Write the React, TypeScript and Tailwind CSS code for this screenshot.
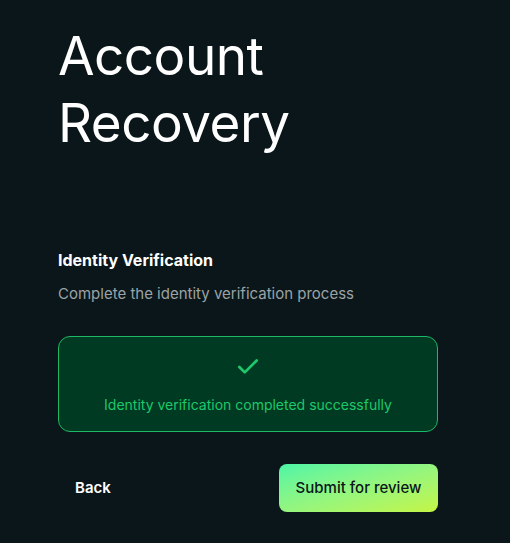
import { Check } from "lucide-react"

export default function App() {
  return (
    <div
      className="min-h-[543px] w-full bg-[#0a1619] text-white"
      style={{ fontFamily: "Inter, 'Liberation Sans', sans-serif" }}
    >
      <div className="w-[380px] ml-[58px] pt-[23px]">
        {/* ── Title ── */}
        <h1 className="text-[53px] leading-[67px] font-normal tracking-[-0.5px]">
          Account
          <br />
          Recovery
        </h1>

        {/* ── Step ── */}
        <div className="mt-[93px]">
          <h2 className="text-[16px] font-bold leading-5">Identity Verification</h2>
          <p className="mt-[14px] text-[15px] leading-5 text-[#9aa3a6]">
            Complete the identity verification process
          </p>
        </div>

        {/* ── Success card ── */}
        <div className="mt-[32px] h-[96px] rounded-xl border border-[#1fb866] bg-[#003a22] flex flex-col items-center justify-center gap-[14px]">
          <Check size={26} strokeWidth={2.5} className="text-[#1ec86a]" />
          <span className="text-[14px] text-[#1ec86a]">Identity verification completed successfully</span>
        </div>

        {/* ── Actions ── */}
        <div className="mt-8 flex items-center justify-between">
          <button type="button" className="px-[17px] h-12 text-[15px] font-semibold text-white">
            Back
          </button>
          <button
            type="button"
            className="h-12 w-[159px] rounded-lg bg-gradient-to-br from-[#4af5a6] to-[#c4f542] text-[15px] font-medium text-[#0a1619]"
          >
            Submit for review
          </button>
        </div>
      </div>
    </div>
  )
}
